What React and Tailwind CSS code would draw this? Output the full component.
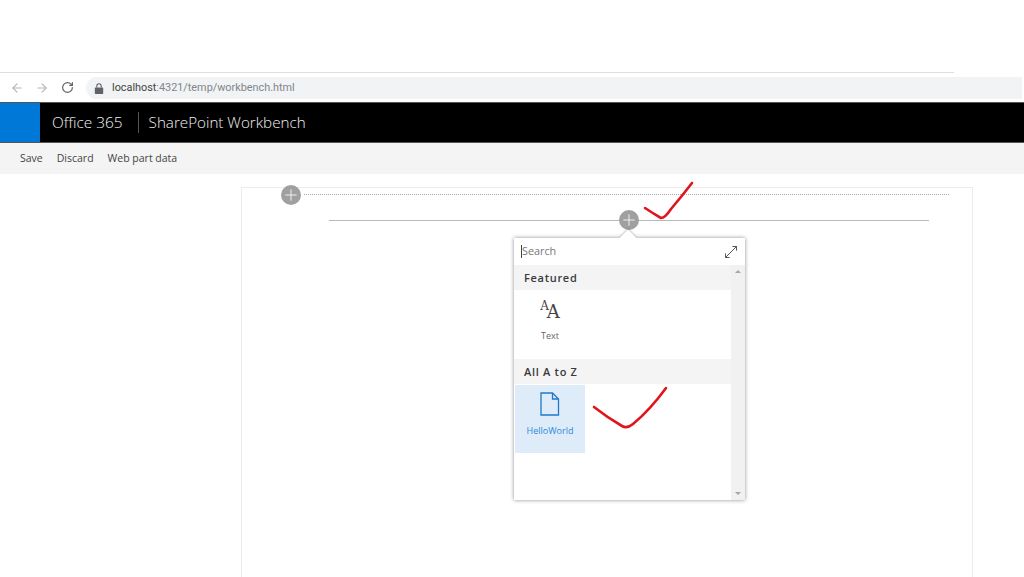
import { ArrowLeft, ArrowRight, RotateCw, Plus } from "lucide-react";

const sans = "font-['Open_Sans','Noto_Sans',sans-serif]";

function AddButton() {
  return (
    <div className="w-[20px] h-[20px] rounded-full bg-[#a0a0a0] flex items-center justify-center">
      <Plus size={18} strokeWidth={1.3} className="text-[#f2f2f2]" />
    </div>
  );
}

function SectionHeader({ label }) {
  return (
    <div className="h-[25px] bg-[#f4f4f4] pl-[10px] pt-px flex items-center text-[11px] font-semibold tracking-[0.7px] text-[#3a3a3a]">
      {label}
    </div>
  );
}

function TextIcon() {
  return (
    <div className="h-[24px] flex items-start justify-center font-['DejaVu_Serif',serif] font-light text-[#444] leading-none">
      <span className="text-[12px] mt-[-1px]">A</span>
      <span className="text-[18px] mt-[2px] ml-[-2px]">A</span>
    </div>
  );
}

function PageIcon() {
  return (
    <svg width="20" height="24" viewBox="0 0 20 24" fill="none" stroke="#1f78c8" strokeWidth="1.3">
      <path d="M1 1h11.5l6 6v16H1z" />
      <path d="M12.5 1v6h6" />
    </svg>
  );
}

function LockIcon() {
  return (
    <svg className="mr-[8px]" width="10" height="11" viewBox="0 0 10 11" fill="#5f6368">
      <path d="M1.5 4.5h7a.7.7 0 0 1 .7.7v5a.7.7 0 0 1-.7.7h-7a.7.7 0 0 1-.7-.7v-5a.7.7 0 0 1 .7-.7z" />
      <path d="M2.8 4.5V3a2.2 2.2 0 0 1 4.4 0v1.5" fill="none" stroke="#5f6368" strokeWidth="1.1" />
    </svg>
  );
}

function Picker() {
  return (
    <div className="absolute left-[514px] top-[238px] w-[231px] h-[262px] bg-white shadow-[0_0_4px_rgba(0,0,0,0.45)]">
      <div className="absolute left-[108px] top-[-6px] w-[12px] h-[12px] rotate-45 bg-white shadow-[-1px_-1px_2px_rgba(0,0,0,0.2)]" />
      <div className="relative h-[27px] bg-white flex items-center pl-[7px] pr-[8px]">
        <div className="w-px h-[13px] bg-[#444]" />
        <span className="text-[10.8px] text-[#777]">Search</span>
        <svg className="ml-auto" width="12" height="12" viewBox="0 0 13 13" fill="none" stroke="#444" strokeWidth="1">
          <path d="M0.5 12.5 12.5 0.5M8 0.5h4.5V5M0.5 8v4.5H5" />
        </svg>
      </div>
      <div className="relative flex h-[235px]">
        <div className="w-[217px]">
          <SectionHeader label="Featured" />
          <div className="h-[69px] pl-[1px] pt-[11px]">
            <div className="w-[70px] flex flex-col items-center">
              <TextIcon />
              <span className="text-[9px] text-[#666] mt-[4px]">Text</span>
            </div>
          </div>
          <SectionHeader label="All A to Z" />
          <div className="pl-[1px] pt-px">
            <div className="w-[70px] h-[68px] bg-[#deecf9] flex flex-col items-center pt-[7px]">
              <PageIcon />
              <span className="text-[9px] text-[#2b88d8] mt-[8px]">HelloWorld</span>
            </div>
          </div>
        </div>
        <div className="w-[14px] bg-[#f1f1f1] flex flex-col items-center justify-between py-[5px]">
          <div className="w-0 h-0 border-x-[3px] border-x-transparent border-b-[3px] border-b-[#a6a6a6]" />
          <div className="w-0 h-0 border-x-[3px] border-x-transparent border-t-[3px] border-t-[#a6a6a6]" />
        </div>
      </div>
    </div>
  );
}

export default function App() {
  return (
    <div className={`relative h-[577px] w-[1024px] overflow-hidden bg-white ${sans}`}>
      <div className="h-[72px]" />
      <div className="w-[954px] h-px bg-[#dcdfe3]" />

      <div className="h-[29px] flex items-center">
        <div className="w-[86px] flex items-center pl-[10px] gap-[11px]">
          <ArrowLeft size={14} className="text-[#b4b6b9]" />
          <ArrowRight size={14} className="text-[#b4b6b9]" />
          <RotateCw size={13} strokeWidth={2.2} className="text-[#5f6368] ml-[1px]" />
        </div>
        <div className="flex-1 mr-[2px] h-[22px] pt-px rounded-l-full bg-[#f1f3f4] flex items-center pl-[8px] text-[10.85px] font-['Roboto',sans-serif]">
          <LockIcon />
          <span className="text-[#444]">localhost</span>
          <span className="text-[#80868b]">:4321/temp/workbench.html</span>
        </div>
      </div>

      <div className="h-[41px] bg-black border-y border-[#555] flex items-center text-[#f0f0f0]">
        <div className="w-[40px] h-full bg-[#0078d7]" />
        <span className="ml-[12px] text-[15.4px] font-light">Office 365</span>
        <div className="w-px h-[21px] bg-[#555] mx-[10px] ml-[15px]" />
        <span className="text-[15.2px] font-light">SharePoint Workbench</span>
      </div>

      <div className="h-[31px] bg-[#f4f4f4] pt-px flex items-center pl-[20px] gap-[14px] text-[10.5px] text-[#444]">
        <span>Save</span>
        <span>Discard</span>
        <span>Web part data</span>
      </div>

      <div className="relative ml-[241px] mt-[13px] w-[732px] h-[400px] border border-[#ececec]">
        <div className="absolute left-[39px] top-[-3px]">
          <AddButton />
        </div>
        <div className="ml-[62px] mr-[23px] mt-[6px] border-t border-dotted border-[#aaa]" />
        <div className="ml-[87px] mr-[43px] mt-[25px] h-px bg-[#b8b8b8]" />
        <div className="absolute left-[377px] top-[22px]">
          <AddButton />
        </div>
      </div>

      <Picker />

      <svg className="absolute left-[640px] top-[178px]" width="60" height="46" viewBox="640 178 60 46" fill="none" stroke="#e0151b" strokeWidth="2.6" strokeLinecap="round" strokeLinejoin="round">
        <path d="M645 208Q654 214 661 218Q665 218 671 209Q682 196 692 183" />
      </svg>
      <svg className="absolute left-[590px] top-[384px]" width="80" height="48" viewBox="590 384 80 48" fill="none" stroke="#e0151b" strokeWidth="2.6" strokeLinecap="round" strokeLinejoin="round">
        <path d="M594 407Q608 418 622 426Q627 429 633 424Q650 410 666 388" />
      </svg>
    </div>
  );
}
